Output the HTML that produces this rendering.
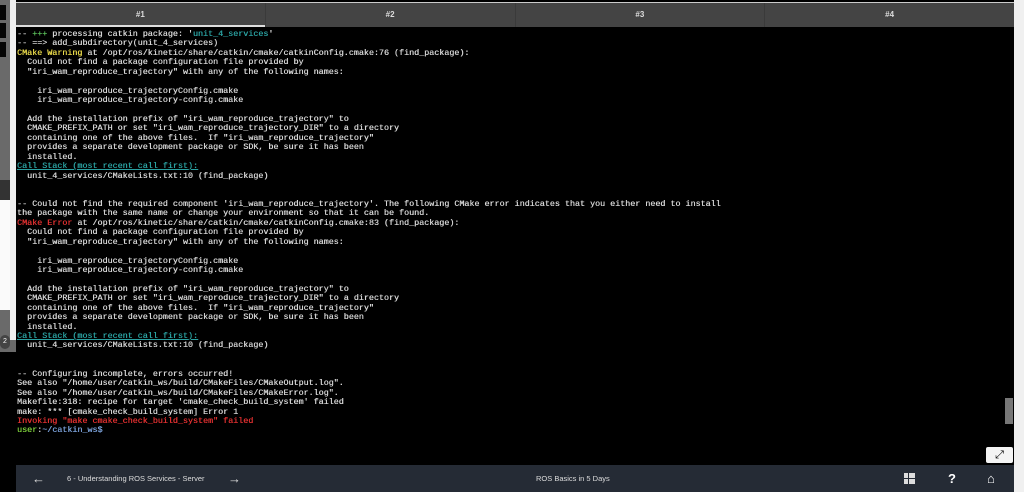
<!DOCTYPE html>
<html><head><meta charset="utf-8"><style>
*{margin:0;padding:0;box-sizing:border-box}
body{width:1024px;height:492px;overflow:hidden;background:#000;position:relative;font-family:"Liberation Sans",sans-serif}
#left{position:absolute;left:0;top:0;width:16px;height:352px;background:#6a6a6a}
#left .b{position:absolute;left:0;width:6px;height:15px;background:#050505}
#lscroll{position:absolute;left:10px;top:0;width:6px;height:340px;background:#f0f0f0}
#rstrip{position:absolute;left:1014px;top:0;width:10px;height:492px;background:#f0f0f0}
#tabs{position:absolute;left:16px;top:2px;width:998px;height:25px;background:#444;border-top:1px solid #ccc;display:flex}
#tabs div{flex:1;color:#ddd;font-size:8px;font-weight:bold;text-align:center;line-height:24px;border-right:1px solid #3a3a3a}
#uline{position:absolute;left:16px;top:25px;width:249px;height:2px;background:#ddd}
#term{position:absolute;left:17px;top:30px;font-family:"Liberation Mono",monospace;font-size:8.4px;line-height:9.43px;color:#d4d4d4;white-space:pre;text-shadow:0.3px 0 0 currentColor}
.y{color:#e8d84a}.r{color:#e03030}.c{color:#2aa0a0;text-decoration:underline}.g{color:#7ccc3a}.bl{color:#7aa0d8}.gr{color:#5bc05b}
#vs{position:absolute;left:1005px;top:398px;width:8px;height:26px;background:#777}
#exp{position:absolute;left:986px;top:447px;width:27px;height:16px;background:#f4f4f4;border-radius:2px;color:#000;font-size:11px;text-align:center;line-height:16px}
#nav{position:absolute;left:16px;top:465px;width:998px;height:27px;background:#252b35;color:#ddd;font-size:7.5px}
#nav span{position:absolute;top:0;line-height:27px}
</style></head><body>
<div id="left"><div class="b" style="top:5px"></div><div class="b" style="top:23px"></div><div class="b" style="top:42px"></div>
<div style="position:absolute;left:0;top:180px;width:10px;height:20px;background:#333"></div>
<div style="position:absolute;left:0;top:200px;width:10px;height:110px;background:#fafafa"></div>
<div style="position:absolute;left:0;top:335px;width:10px;height:14px;background:#444;border-radius:7px;color:#fff;font-size:7px;line-height:14px;text-align:center">2</div>
</div>
<div id="lscroll"></div>
<div id="rstrip"></div>
<div id="tabs"><div>#1</div><div>#2</div><div>#3</div><div style="border:none">#4</div></div>
<div id="uline"></div>
<div id="term">-- <span class="gr">+++</span> processing catkin package: '<span class="c" style="text-decoration:none">unit_4_services</span>'
-- ==&gt; add_subdirectory(unit_4_services)
<span class="y">CMake Warning</span> at /opt/ros/kinetic/share/catkin/cmake/catkinConfig.cmake:76 (find_package):
  Could not find a package configuration file provided by
  "iri_wam_reproduce_trajectory" with any of the following names:

    iri_wam_reproduce_trajectoryConfig.cmake
    iri_wam_reproduce_trajectory-config.cmake

  Add the installation prefix of "iri_wam_reproduce_trajectory" to
  CMAKE_PREFIX_PATH or set "iri_wam_reproduce_trajectory_DIR" to a directory
  containing one of the above files.  If "iri_wam_reproduce_trajectory"
  provides a separate development package or SDK, be sure it has been
  installed.
<span class="c">Call Stack (most recent call first):</span>
  unit_4_services/CMakeLists.txt:10 (find_package)


-- Could not find the required component 'iri_wam_reproduce_trajectory'. The following CMake error indicates that you either need to install
the package with the same name or change your environment so that it can be found.
<span class="r">CMake Error</span> at /opt/ros/kinetic/share/catkin/cmake/catkinConfig.cmake:83 (find_package):
  Could not find a package configuration file provided by
  "iri_wam_reproduce_trajectory" with any of the following names:

    iri_wam_reproduce_trajectoryConfig.cmake
    iri_wam_reproduce_trajectory-config.cmake

  Add the installation prefix of "iri_wam_reproduce_trajectory" to
  CMAKE_PREFIX_PATH or set "iri_wam_reproduce_trajectory_DIR" to a directory
  containing one of the above files.  If "iri_wam_reproduce_trajectory"
  provides a separate development package or SDK, be sure it has been
  installed.
<span class="c">Call Stack (most recent call first):</span>
  unit_4_services/CMakeLists.txt:10 (find_package)


-- Configuring incomplete, errors occurred!
See also "/home/user/catkin_ws/build/CMakeFiles/CMakeOutput.log".
See also "/home/user/catkin_ws/build/CMakeFiles/CMakeError.log".
Makefile:318: recipe for target 'cmake_check_build_system' failed
make: *** [cmake_check_build_system] Error 1
<span class="r">Invoking "make cmake_check_build_system" failed</span>
<span class="g">user</span>:<span class="bl">~/catkin_ws$</span></div>
<div id="vs"></div>
<div id="exp">⤢</div>
<div id="nav">
<span style="left:16px;font-size:13px">←</span>
<span style="left:51px">6 - Understanding ROS Services - Server</span>
<span style="left:212px;font-size:13px">→</span>
<span style="left:520px">ROS Basics in 5 Days</span>
<span style="left:888px;top:8px;width:11px;height:11px;display:grid;grid-template-columns:4px 6px;gap:1px"><i style="background:#ddd"></i><i style="background:#ddd"></i><i style="background:#ddd"></i><i style="background:#ddd"></i></span>
<span style="left:932px;font-size:13px;font-weight:bold;color:#fff">?</span>
<span style="left:971px;font-size:13px;color:#fff">⌂</span>
</div>
</body></html>
